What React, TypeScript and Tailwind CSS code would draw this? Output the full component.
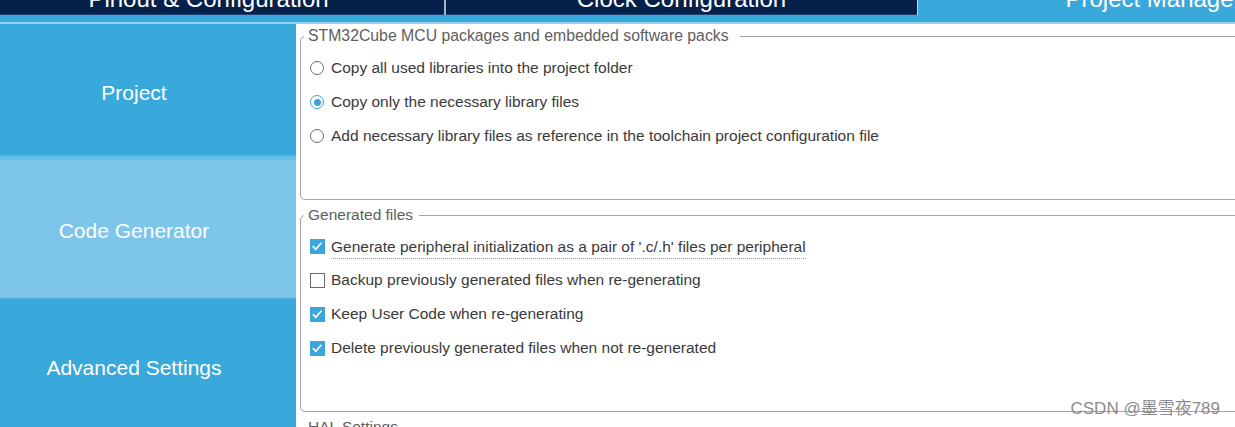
import React from "react";

const Radio = ({ checked }: { checked?: boolean }) =>
  checked ? (
    <span className="w-[14px] h-[14px] rounded-full border-[1.5px] border-[#3ba4dc] bg-white flex items-center justify-center">
      <span className="w-[7px] h-[7px] rounded-full bg-[#3ba4dc]" />
    </span>
  ) : (
    <span className="w-[14px] h-[14px] rounded-full border-[1.5px] border-[#6b6b6b] bg-white" />
  );

const Check = ({ checked }: { checked?: boolean }) =>
  checked ? (
    <span className="w-[15px] h-[15px] bg-[#3ba6dd] flex items-center justify-center">
      <svg width="12" height="12" viewBox="0 0 12 12">
        <path d="M1.8 6.2 L4.8 9.3 L10.4 2.8" stroke="white" strokeWidth="1.7" fill="none" />
      </svg>
    </span>
  ) : (
    <span className="w-[15px] h-[15px] border-[1.5px] border-[#6b6b6b] bg-white" />
  );

const Row = ({ control, children }: { control: React.ReactNode; children: React.ReactNode }) => (
  <div className="h-[34px] flex items-center pl-[8px] gap-[6px]">
    <span className="w-[16px] flex justify-center">{control}</span>
    <span className="text-[15.5px] leading-[18px] text-[#3a3a3a] whitespace-nowrap">{children}</span>
  </div>
);

const Legend = ({ children, wide }: { children: React.ReactNode; wide?: boolean }) => (
  <legend
    className={
      wide
        ? "ml-[3px] pl-[4px] pr-[11px] text-[15.8px] leading-[18px] text-[#5e5e5e] whitespace-nowrap"
        : "ml-[3px] pl-[4px] pr-[6px] text-[15.5px] leading-[18px] text-[#5e5e5e] whitespace-nowrap"
    }
  >
    {children}
  </legend>
);

export default function App() {
  return (
    <div className="w-[1235px] h-[427px] overflow-hidden relative bg-white font-['Liberation_Sans','Noto_Sans_CJK_SC',sans-serif]">
      {/* top tabs */}
      <div className="h-[15px] flex overflow-hidden ml-[-27px] text-white text-[24px] leading-[24px]">
        <div className="w-[471px] shrink-0 bg-[#05214a] border-b border-[#1c4677] text-center">
          <div className="mt-[-13px]">Pinout &amp; Configuration</div>
        </div>
        <div className="w-[2px] shrink-0 bg-[#a3b5cc]" />
        <div className="w-[471px] shrink-0 bg-[#05214a] border-b border-[#1c4677] text-center">
          <div className="mt-[-13px]">Clock Configuration</div>
        </div>
        <div className="w-[1px] shrink-0 bg-[#b8def2]" />
        <div className="w-[471px] shrink-0 bg-[#39a9db] text-center">
          <div className="mt-[-13px]">Project Manager</div>
        </div>
      </div>
      <div className="h-[7px] bg-[#39a9db]" />
      <div className="h-[2px] bg-[#93d2f0]" />

      <div className="flex h-[403px]">
        {/* sidebar */}
        <div className="w-[296px] shrink-0 bg-[#39a9db] flex flex-col text-white text-[21px]">
          <div className="h-[131px] flex items-center justify-center pr-[28px] pt-[6px]">Project</div>
          <div className="h-[2px] bg-[#58b6e3]" />
          <div className="h-[3px] bg-[#6bbfe7]" />
          <div className="h-[137px] bg-[#7dc5e9] flex items-center justify-center pr-[28px] pt-[5px]">Code Generator</div>
          <div className="h-[2px] bg-[#5cb8e4]" />
          <div className="flex-1 flex items-start justify-center pr-[28px] pt-[53px]">Advanced Settings</div>
        </div>

        {/* content */}
        <div className="flex-1 min-w-0 overflow-hidden pl-[4px] pt-[3px] flex flex-col gap-[6px]">
          <fieldset className="border border-[#a5a5a5] rounded-[5px] h-[173px] mr-[-20px] min-w-0 shrink-0">
            <Legend wide>STM32Cube MCU packages and embedded software packs</Legend>
            <div className="pt-[6px]">
              <Row control={<Radio />}>Copy all used libraries into the project folder</Row>
              <Row control={<Radio checked />}>Copy only the necessary library files</Row>
              <Row control={<Radio />}>Add necessary library files as reference in the toolchain project configuration file</Row>
            </div>
          </fieldset>

          <fieldset className="border border-[#a5a5a5] rounded-[5px] h-[206px] mr-[-20px] min-w-0 shrink-0">
            <Legend>Generated files</Legend>
            <div className="pt-[5px]">
              <Row control={<Check checked />}>
                <span className="inline-block border-b border-dotted border-[#9a9a9a] pb-[2px] translate-y-[2px]">
                  Generate peripheral initialization as a pair of '.c/.h' files per peripheral
                </span>
              </Row>
              <Row control={<Check />}>Backup previously generated files when re-generating</Row>
              <Row control={<Check checked />}>Keep User Code when re-generating</Row>
              <Row control={<Check checked />}>Delete previously generated files when not re-generated</Row>
            </div>
          </fieldset>

          <fieldset className="border border-[#a5a5a5] rounded-[5px] h-[100px] mr-[-20px] min-w-0 shrink-0">
            <Legend>HAL Settings</Legend>
          </fieldset>
        </div>
      </div>

      <div className="absolute right-[15px] bottom-[9px] text-[17px] leading-[18px] text-[#8c8c8c] whitespace-nowrap">
        CSDN @墨雪夜789
      </div>
    </div>
  );
}
